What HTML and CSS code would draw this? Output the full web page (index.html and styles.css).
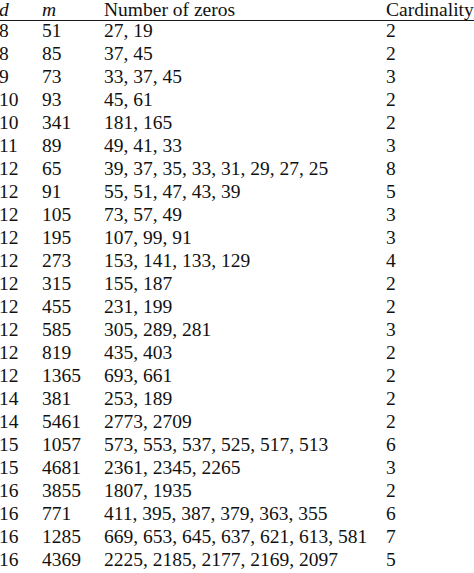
FILE: index.html
```html
<!DOCTYPE html>
<html>
<head>
<meta charset="utf-8">
<link rel="stylesheet" href="styles.css">
</head>
<body>
<table class="zeros">
  <colgroup>
    <col class="c-d"><col class="c-m"><col class="c-z"><col class="c-card">
  </colgroup>
  <thead>
    <tr><th><i>d</i></th><th><i>m</i></th><th>Number of zeros</th><th>Cardinality</th></tr>
  </thead>
  <tbody>
    <tr><td>8</td><td>51</td><td>27, 19</td><td>2</td></tr>
    <tr><td>8</td><td>85</td><td>37, 45</td><td>2</td></tr>
    <tr><td>9</td><td>73</td><td>33, 37, 45</td><td>3</td></tr>
    <tr><td>10</td><td>93</td><td>45, 61</td><td>2</td></tr>
    <tr><td>10</td><td>341</td><td>181, 165</td><td>2</td></tr>
    <tr><td>11</td><td>89</td><td>49, 41, 33</td><td>3</td></tr>
    <tr><td>12</td><td>65</td><td>39, 37, 35, 33, 31, 29, 27, 25</td><td>8</td></tr>
    <tr><td>12</td><td>91</td><td>55, 51, 47, 43, 39</td><td>5</td></tr>
    <tr><td>12</td><td>105</td><td>73, 57, 49</td><td>3</td></tr>
    <tr><td>12</td><td>195</td><td>107, 99, 91</td><td>3</td></tr>
    <tr><td>12</td><td>273</td><td>153, 141, 133, 129</td><td>4</td></tr>
    <tr><td>12</td><td>315</td><td>155, 187</td><td>2</td></tr>
    <tr><td>12</td><td>455</td><td>231, 199</td><td>2</td></tr>
    <tr><td>12</td><td>585</td><td>305, 289, 281</td><td>3</td></tr>
    <tr><td>12</td><td>819</td><td>435, 403</td><td>2</td></tr>
    <tr><td>12</td><td>1365</td><td>693, 661</td><td>2</td></tr>
    <tr><td>14</td><td>381</td><td>253, 189</td><td>2</td></tr>
    <tr><td>14</td><td>5461</td><td>2773, 2709</td><td>2</td></tr>
    <tr><td>15</td><td>1057</td><td>573, 553, 537, 525, 517, 513</td><td>6</td></tr>
    <tr><td>15</td><td>4681</td><td>2361, 2345, 2265</td><td>3</td></tr>
    <tr><td>16</td><td>3855</td><td>1807, 1935</td><td>2</td></tr>
    <tr><td>16</td><td>771</td><td>411, 395, 387, 379, 363, 355</td><td>6</td></tr>
    <tr><td>16</td><td>1285</td><td>669, 653, 645, 637, 621, 613, 581</td><td>7</td></tr>
    <tr><td>16</td><td>4369</td><td>2225, 2185, 2177, 2169, 2097</td><td>5</td></tr>
  </tbody>
</table>
</body>
</html>
```
FILE: styles.css
```css
html, body {
  margin: 0;
  padding: 0;
  background: #ffffff;
  overflow: hidden;
}

.zeros {
  font-family: "Liberation Serif", "Times New Roman", serif;
  font-size: 19.5px;
  color: #111111;
  border-collapse: collapse;
  table-layout: fixed;
  width: 476px;
  margin-left: -1px;
}

.c-d { width: 43px; }
.c-m { width: 62px; }
.c-z { width: 282px; }
.c-card { width: 89px; }

.zeros th,
.zeros td {
  padding: 0;
  text-align: left;
  font-weight: normal;
  white-space: nowrap;
  line-height: 19px;
  vertical-align: top;
}

.zeros th {
  padding-bottom: 1px;
  border-bottom: 1px solid #1a1a1a;
}

.zeros td {
  padding-bottom: 4px;
}
```
